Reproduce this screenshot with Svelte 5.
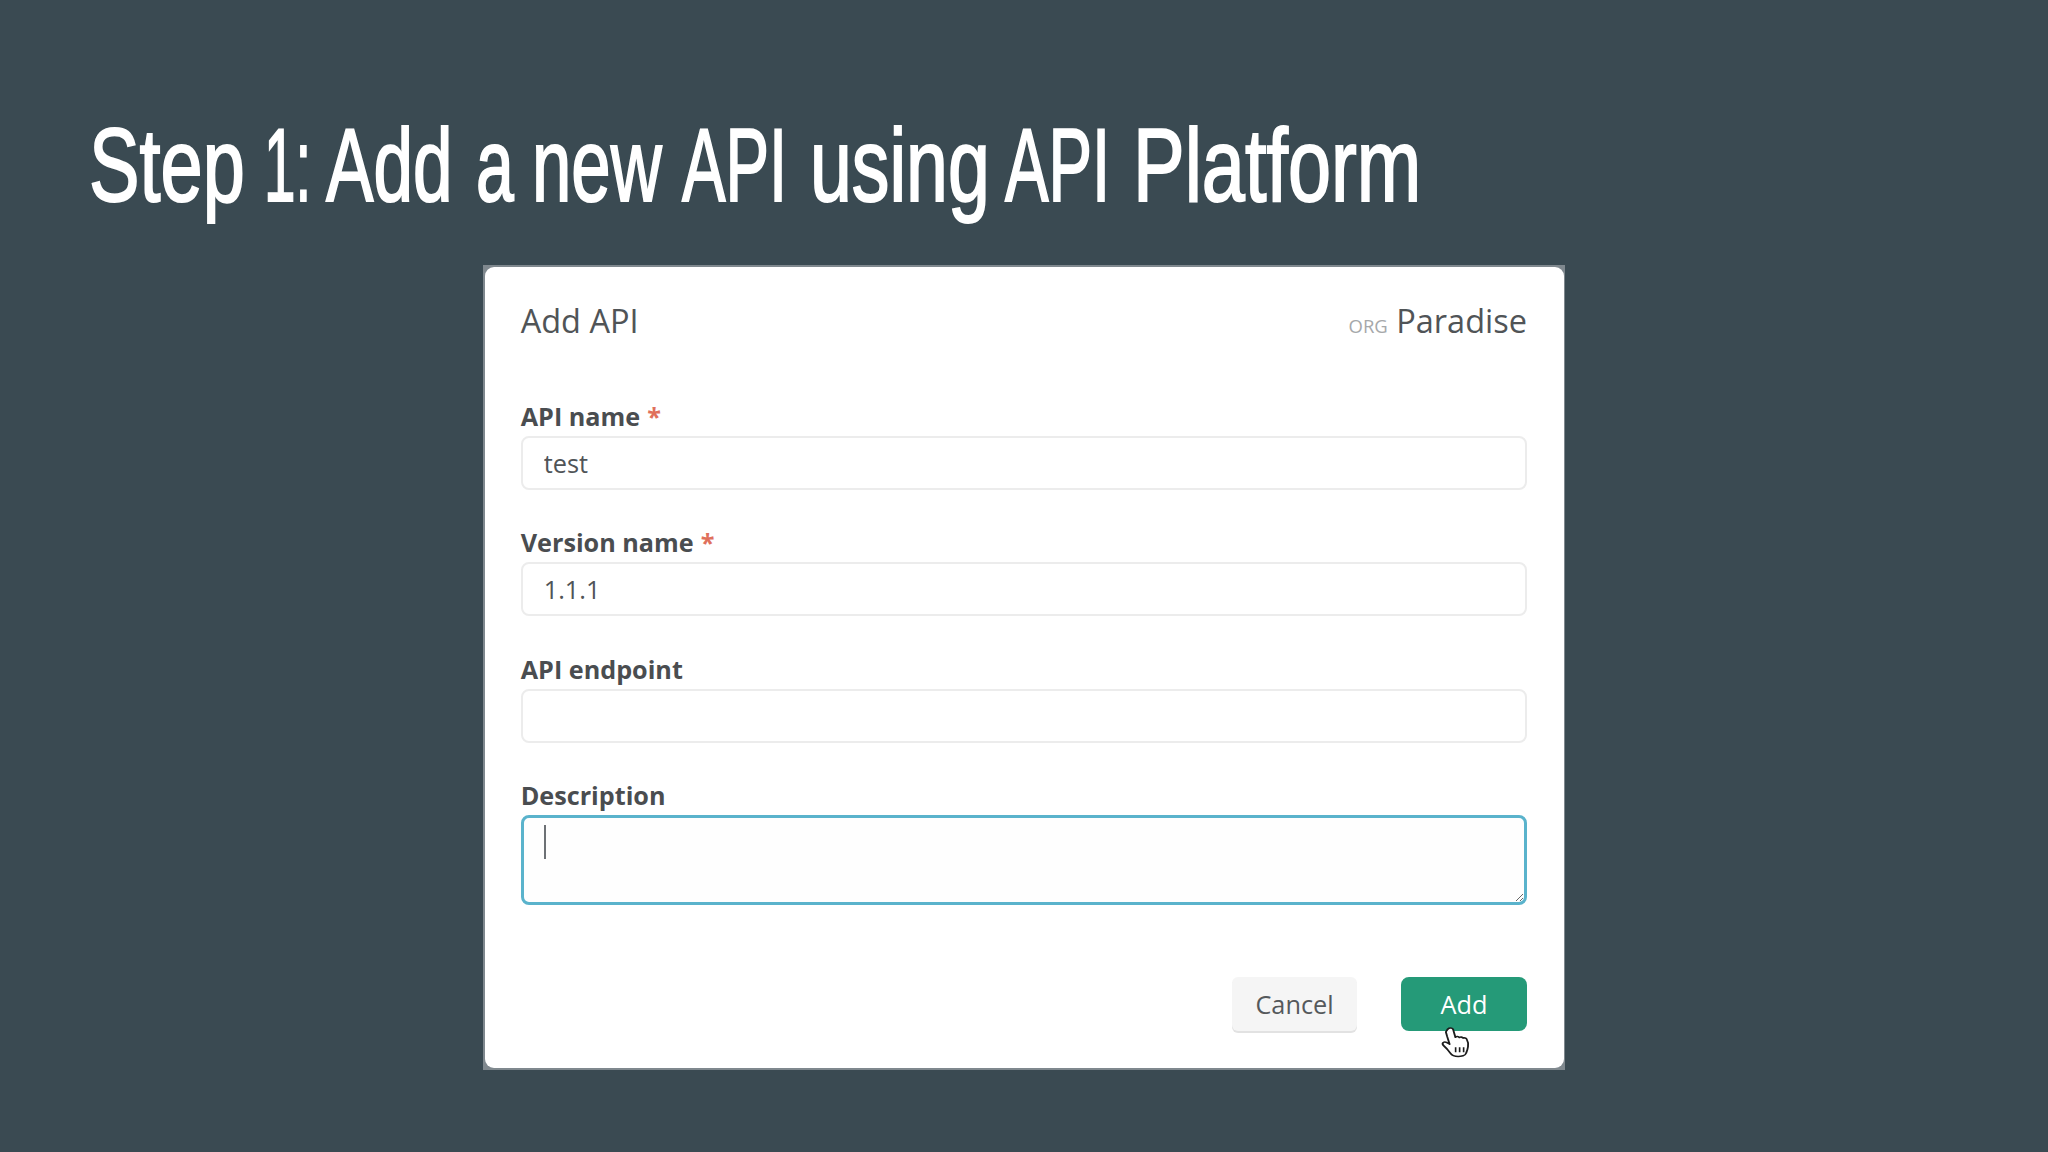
<script>
  const words = [
    { t: 'Step', w: 175, s: 0.735 },
    { t: '1:', w: 61.5, s: 0.55 },
    { t: 'Add', w: 150, s: 0.69 },
    { t: 'a', w: 56, s: 0.66 },
    { t: 'new', w: 150, s: 0.687 },
    { t: 'API', w: 128, s: 0.634 },
    { t: 'using', w: 195, s: 0.73 },
    { t: 'API', w: 128.5, s: 0.634 },
    { t: 'Platform', w: 288, s: 0.752 }
  ];
  const fields = [
    { label: 'API name', required: true, value: 'test' },
    { label: 'Version name', required: true, value: '1.1.1' },
    { label: 'API endpoint', required: false, value: '' }
  ];
</script>

<div class="slide">
  <h1 class="title">
    {#each words as w}
      <span class="word" style="width:{w.w}px"><span class="glyphs" style="transform:scaleX({w.s})">{w.t}</span> </span>
    {/each}
  </h1>

  <div class="frame">
    <form class="card" onsubmit={(e) => e.preventDefault()}>
      <header class="head">
        <h2>Add API</h2>
        <div class="org"><small>ORG</small> Paradise</div>
      </header>

      {#each fields as f}
        <div class="field">
          <label for={f.label}>{f.label}{#if f.required}<em>*</em>{/if}</label>
          <input id={f.label} type="text" value={f.value} />
        </div>
      {/each}

      <div class="field last">
        <label for="desc">Description</label>
        <div class="area">
          <textarea id="desc"></textarea>
          <span class="caret"></span>
        </div>
      </div>

      <div class="actions">
        <button type="button" class="cancel">Cancel</button>
        <button type="submit" class="add">Add
          <svg class="hand" viewBox="0 0 28 32" width="35" height="33" preserveAspectRatio="none" aria-hidden="true">
            <path d="M8 2.2c1.4-.8 3 0 3.400 1.500l1.700 7.200c.9-1 2.500-.9 3.200.3.9-.8 2.400-.5 3 .6 1-.6 2.300-.2 2.800.8 1 2 1.400 4.800 1.100 7.500-.3 2.600-.9 4.500-1.500 6.200-.3 1-1.200 2.200-2.400 2.600-2.500.800-5.800.800-7.800-.200-1.200-.6-1.900-1.500-2.600-2.700-1.500-2.500-3.200-4.800-5-6.700-1-1.100-1.300-2.500-.5-3.300 1-.9 2.900-.3 4.500 1.200l.6.500-2-7.600-1-4.300C6.200 4.300 6.700 3 8 2.200z" fill="#fff" stroke="#1c1c1c" stroke-width="1.500" stroke-linejoin="round"/>
            <path d="M13.300 20.500v5M16.500 20.500v5M19.700 20.500v5" fill="none" stroke="#1c1c1c" stroke-width="1.300"/>
          </svg>
        </button>
      </div>
    </form>
  </div>
</div>

<style>
  :global(body) {
    margin: 0;
    background: #3a4a52;
  }
  .slide {
    width: 2048px;
    height: 1152px;
    background: #3a4a52;
    box-sizing: border-box;
    padding-top: 107.500px;
    overflow: hidden;
  }
  .title {
    display: flex;
    margin: 0 0 0 89px;
    height: 116px;
    font: 400 103px/116px "Liberation Sans", Arial, sans-serif;
    color: #fff;
    white-space: nowrap;
  }
  .word {
    display: block;
    flex: none;
  }
  .glyphs {
    display: inline-block;
    transform-origin: left center;
    -webkit-text-stroke: 2px #fff;
  }
  .frame {
    margin: 41.500px 0 0 483px;
    width: 1082px;
    background: #7f888e;
    padding: 1.500px;
    box-sizing: border-box;
  }
  .card {
    background: #fff;
    border-radius: 9px;
    box-sizing: border-box;
    padding: 32px 36.500px 37px 36.200px;
    font-family: "Open Sans", sans-serif;
    color: #474b4e;
  }
  .head {
    display: flex;
    justify-content: space-between;
    align-items: baseline;
    margin-bottom: 54.200px;
    line-height: 44px;
  }
  h2 {
    margin: 0;
    font-size: 32.500px;
    font-weight: 400;
    line-height: 44px;
    color: #505457;
  }
  .org {
    font-size: 32.500px;
    color: #505457;
  }
  .org small {
    font-size: 18.500px;
    color: #a6a8aa;
    margin-right: 0;
  }
  .field {
    margin-bottom: 38.600px;
  }
  .field.last {
    margin-bottom: 71.700px;
  }
  label {
    display: block;
    height: 34px;
    line-height: 28.500px;
    font-size: 25.200px;
    font-weight: 700;
    color: #4a4d50;
  }
  em {
    font-style: normal;
    color: #e0705c;
    margin-left: 7px;
  }
  input,
  textarea {
    display: block;
    width: 100%;
    box-sizing: border-box;
    font: 400 25.300px "Open Sans", sans-serif;
    color: #505457;
    background: #fff;
    border: 2px solid #ececec;
    border-radius: 8px;
    outline: none;
    margin: 0;
  }
  input {
    height: 54px;
    padding: 0 21px;
  }
  .area {
    position: relative;
  }
  textarea {
    height: 90px;
    resize: vertical;
    border: 3px solid #5ab3cc;
    background: #fefefe;
  }
  .caret {
    position: absolute;
    left: 23px;
    top: 10px;
    width: 2px;
    height: 34px;
    background: #6d7175;
  }
  .actions {
    display: flex;
    justify-content: flex-end;
    gap: 44px;
  }
  button {
    position: relative;
    height: 54px;
    width: 126px;
    border: 0;
    border-radius: 8px;
    font: 400 25.300px "Open Sans", sans-serif;
    padding: 0;
  }
  .cancel {
    background: #f5f5f5;
    color: #55595c;
    box-shadow: 0 2px 0 #e2e2e2;
    border-radius: 6px;
    width: 125px;
  }
  .add {
    background: #259a78;
    color: #fff;
  }
  .hand {
    position: absolute;
    left: 38px;
    top: 49px;
    display: block;
  }
</style>
